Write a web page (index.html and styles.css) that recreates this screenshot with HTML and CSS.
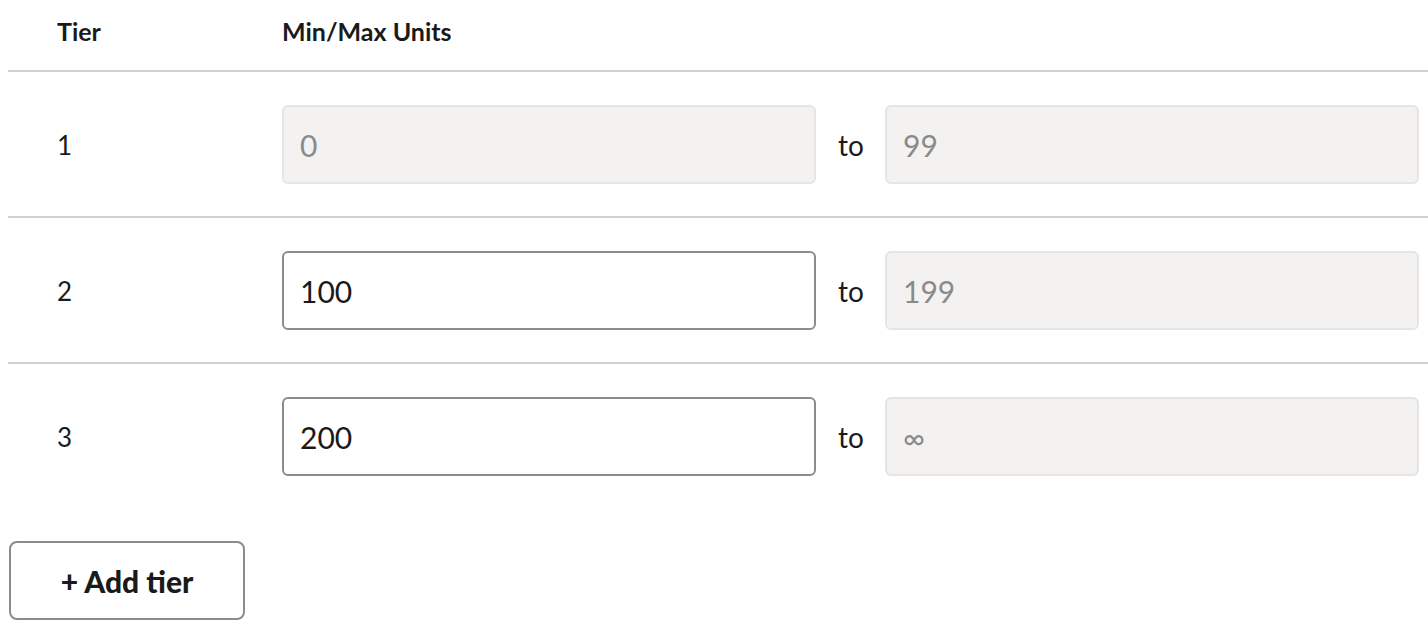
FILE: index.html
```html
<!DOCTYPE html>
<html lang="en">
<head>
    <meta charset="UTF-8">
    <title>Pricing tiers</title>
    <link rel="stylesheet" href="styles.css">
</head>
<body>
    <div class="tiers">
        <div class="tier-head">
            <div class="col-tier">Tier</div>
            <div class="col-units">Min/Max Units</div>
        </div>

        <div class="tier-row">
            <div class="col-tier">1</div>
            <input class="field" type="text" value="0" disabled>
            <span class="to">to</span>
            <input class="field" type="text" value="99" disabled>
        </div>

        <div class="tier-row">
            <div class="col-tier">2</div>
            <input class="field" type="text" value="100">
            <span class="to">to</span>
            <input class="field" type="text" value="199" disabled>
        </div>

        <div class="tier-row last">
            <div class="col-tier">3</div>
            <input class="field" type="text" value="200">
            <span class="to">to</span>
            <input class="field" type="text" value="∞" disabled>
        </div>

        <button class="add-tier" type="button">+ Add tier</button>
    </div>
</body>
</html>
```

FILE: styles.css
```css
body {
    margin: 0;
    font-family: Lato, "Open Sans", sans-serif;
    color: #1a1a1a;
    background: #fff;
}
.tiers {
    padding-left: 8px;
}
.tier-head {
    display: flex;
    height: 70px;
    align-items: center;
    border-bottom: 2px solid #d0d0d0;
    font-size: 25px;
    font-weight: 700;
}
.tier-head .col-tier {
    width: 225px;
    padding-left: 49px;
    padding-bottom: 8px;
}
.tier-head .col-units {
    padding-bottom: 8px;
}
.tier-row {
    display: grid;
    grid-template-columns: 274px 534px 69px 534px;
    align-items: center;
    padding: 33px 0 32px;
    border-bottom: 2px solid #d0d0d0;
}
.tier-row.last {
    border-bottom: none;
}
.tier-row .col-tier {
    padding-left: 49px;
    font-size: 26px;
}
.field {
    box-sizing: border-box;
    height: 79px;
    width: 100%;
    padding: 0 16px;
    font-family: Lato, "Open Sans", sans-serif;
    font-size: 30px;
    color: #1a1a1a;
    background: #fff;
    border: 2px solid #8c8c8c;
    border-radius: 6px;
    outline: none;
}
.field:disabled {
    background: #f3f2f1;
    border-color: #e6e5e4;
    color: #8a8a8a;
}
.to {
    font-size: 28px;
    padding-left: 22px;
}
.add-tier {
    margin-top: 33px;
    margin-left: 1px;
    width: 236px;
    height: 79px;
    background: #fff;
    border: 2px solid #8c8c8c;
    border-radius: 8px;
    font-family: Lato, "Open Sans", sans-serif;
    font-size: 30px;
    font-weight: 900;
    color: #1a1a1a;
}
```
